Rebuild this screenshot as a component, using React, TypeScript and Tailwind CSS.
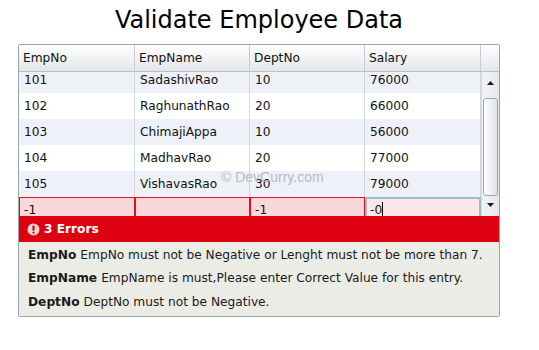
import React from "react";

type Emp = { no: string; name: string; dept: string; salary: string };

const rows: Emp[] = [
  { no: "101", name: "SadashivRao", dept: "10", salary: "76000" },
  { no: "102", name: "RaghunathRao", dept: "20", salary: "66000" },
  { no: "103", name: "ChimajiAppa", dept: "10", salary: "56000" },
  { no: "104", name: "MadhavRao", dept: "20", salary: "77000" },
  { no: "105", name: "VishavasRao", dept: "30", salary: "79000" },
];

const colW = ["w-[116px]", "w-[115px]", "w-[115px]", "w-[116px]"];
const headers = ["EmpNo", "EmpName", "DeptNo", "Salary"];

const errors = [
  { field: "EmpNo", msg: "EmpNo must not be Negative or Lenght must not be more than 7." },
  { field: "EmpName", msg: "EmpName is must,Please enter Correct Value for this entry." },
  { field: "DeptNo", msg: "DeptNo must not be Negative." },
];

function ErrorIcon() {
  return (
    <svg width="13" height="13" viewBox="0 0 13 13" aria-hidden="true">
      <circle cx="6.5" cy="6.5" r="6" fill="#f6d4d6" />
      <rect x="5.4" y="2.4" width="2.2" height="5.4" rx="1" fill="#dc0010" />
      <circle cx="6.5" cy="9.7" r="1.15" fill="#dc0010" />
    </svg>
  );
}

function ScrollBar() {
  return (
    <div className="w-[18px] shrink-0 flex flex-col items-center bg-gradient-to-r from-[#f2f3f5] to-[#e4e7ea] border-l border-[#d6dadf]">
      <div className="h-[22px] flex items-center justify-center">
        <svg width="7" height="4" viewBox="0 0 7 4">
          <path d="M0 4 L3.5 0 L7 4 Z" fill="#1a1a1a" />
        </svg>
      </div>
      <div className="w-[15px] h-[98px] mt-[4px] rounded-[3px] border border-[#9ca6b1] bg-gradient-to-r from-[#ffffff] to-[#dfe3e7]" />
      <div className="h-[18px] flex items-center justify-center">
        <svg width="7" height="4" viewBox="0 0 7 4">
          <path d="M0 0 L7 0 L3.5 4 Z" fill="#1a1a1a" />
        </svg>
      </div>
    </div>
  );
}

export default function App() {
  return (
    <div className="w-[539px] h-[350px] bg-white text-[#111] font-['DejaVu_Sans',sans-serif]">
      <div className="ml-[18px] w-[482px]">
        <h1 className="h-[44px] pt-[5px] text-center text-[24px] leading-[30px] text-black">
          Validate Employee Data
        </h1>

        <div className="relative border border-[#9aa4b0] rounded-[2px] text-[12.2px] overflow-hidden">
          {/* header */}
          <div className="flex h-[27px] border-b border-[#b9c0c8] bg-gradient-to-b from-[#ffffff] to-[#e3e6ea]">
            {headers.map((h, i) => (
              <div
                key={h}
                className={`${colW[i]} shrink-0 border-r border-[#c7ccd2] pl-[4px] flex items-center`}
              >
                {h}
              </div>
            ))}
            <div className="w-[18px] shrink-0" />
          </div>

          {/* body */}
          <div className="flex h-[144px]">
            <div className="w-[462px] overflow-hidden">
              <div className="-mt-[5px]">
                {rows.map((r, idx) => (
                  <div
                    key={r.no}
                    className={`flex h-[26px] ${idx % 2 === 0 ? "bg-[#eef2f8]" : "bg-white"}`}
                  >
                    {[r.no, r.name, r.dept, r.salary].map((v, i) => (
                      <div
                        key={i}
                        className={`${colW[i]} shrink-0 border-r border-[#d3d7dc] pl-[5px] flex items-center`}
                      >
                        {v}
                      </div>
                    ))}
                  </div>
                ))}
                <div className="flex h-[26px] bg-white">
                  {["-1", "", "-1"].map((v, i) => (
                    <div
                      key={i}
                      className={`${colW[i]} shrink-0 border border-[#e0101c] bg-[#f8d7da] pl-[4px] pt-[3px]`}
                    >
                      {v}
                    </div>
                  ))}
                  <div className={`${colW[3]} shrink-0 border-2 border-[#8fc0d4] bg-[#fbe6e8] pl-[3px] pt-[2px] flex items-start`}>
                    <span>-0</span>
                    <span className="inline-block w-[1px] h-[14px] bg-black mt-[1px]" />
                  </div>
                </div>
              </div>
            </div>
            <ScrollBar />
          </div>

          {/* validation summary */}
          <div className="h-[26px] bg-[#dc0010] flex items-center gap-[4px] pl-[8px] text-white font-bold">
            <ErrorIcon />
            <span>3 Errors</span>
          </div>
          <div className="bg-[#ecece6] pt-[1px] pb-[2px] px-[9px] text-[#1a1a1a]">
            {errors.map((e) => (
              <div key={e.field} className="h-[23.5px] flex items-center">
                <span className="font-bold mr-[4px]">{e.field}</span>
                <span>{e.msg}</span>
              </div>
            ))}
          </div>

          {/* watermark */}
          <div className="absolute left-[202px] top-[122px] text-[14px] font-['Liberation_Sans',sans-serif] text-[#a4adb6]/80 pointer-events-none">
            © DevCurry.com
          </div>
        </div>
      </div>
    </div>
  );
}
